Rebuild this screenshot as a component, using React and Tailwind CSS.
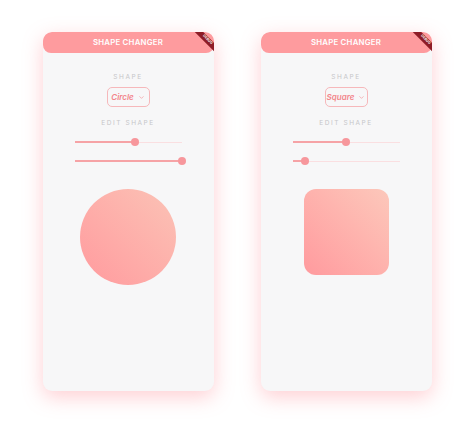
import { ChevronDown } from 'lucide-react';

const cards = [
  { shape: 'Circle', first: 0.57, second: 1 },
  { shape: 'Square', first: 0.5, second: 0.12 },
];

function Slider({ value }) {
  const pct = `${value * 100}%`;
  return (
    <div className="relative h-[18px] w-full">
      <div className="absolute left-0 right-0 top-[8.5px] h-px bg-[#fadfe1]" />
      <div className="absolute left-0 top-[8px] h-[2px] bg-[#f6a3a6]" style={{ width: pct }} />
      <div
        className="absolute top-[5px] h-[8px] w-[8px] -translate-x-1/2 rounded-full bg-[#f7979c]"
        style={{ left: pct }}
      />
    </div>
  );
}

function ShapeCard({ shape, first, second }) {
  return (
    <div className="relative flex h-[359px] w-[171px] flex-col overflow-hidden rounded-[9px] bg-[#f7f7f8] shadow-[0_6px_20px_rgba(255,130,140,0.38)]">
      <div className="flex h-[21px] items-center justify-center rounded-[8px] bg-[#fe9b9e] text-[7.8px] font-semibold tracking-[0.03em] text-white">
        SHAPE CHANGER
      </div>

      <div className="absolute -right-[13px] top-[5px] flex h-[6px] w-[40px] rotate-45 items-center justify-center bg-[#8e1c26] text-[3.5px] font-bold leading-none text-white">
        DEBUG
      </div>

      <div className="flex flex-col items-center px-[32px] pt-[20px]">
        <span className="text-[6.5px] leading-[8px] tracking-[0.24em] text-[#c6c6c8]">SHAPE</span>
        <div className="mt-[6px] flex h-[20px] w-[43px] items-center justify-center gap-[4px] rounded-[5px] border border-[#f6b8bb] text-[8px] font-semibold italic text-[#f3848a]">
          <span>{shape}</span>
          <ChevronDown size={7} strokeWidth={2.5} className="text-[#f3a0a4]" />
        </div>
        <span className="mt-[12px] text-[6.5px] leading-[8px] tracking-[0.24em] text-[#c6c6c8]">EDIT SHAPE</span>
        <div className="mt-[6px] flex w-full flex-col gap-px">
          <Slider value={first} />
          <Slider value={second} />
        </div>
        <div className="mt-[19px]">
          {shape === 'Circle' ? (
            <div className="h-[96px] w-[96px] rounded-full bg-gradient-to-tr from-[#ff9a9e] to-[#fbc3b6]" />
          ) : (
            <div className="h-[86px] w-[85px] rounded-[12px] bg-gradient-to-tr from-[#ff9a9e] to-[#fcc8bb]" />
          )}
        </div>
      </div>
    </div>
  );
}

export default function App() {
  return (
    <div className="flex h-[430px] w-[474px] justify-center gap-[47px] bg-white pt-[32px] font-['Inter','Noto_Sans',sans-serif]">
      {cards.map((card) => (
        <ShapeCard key={card.shape} {...card} />
      ))}
    </div>
  );
}
